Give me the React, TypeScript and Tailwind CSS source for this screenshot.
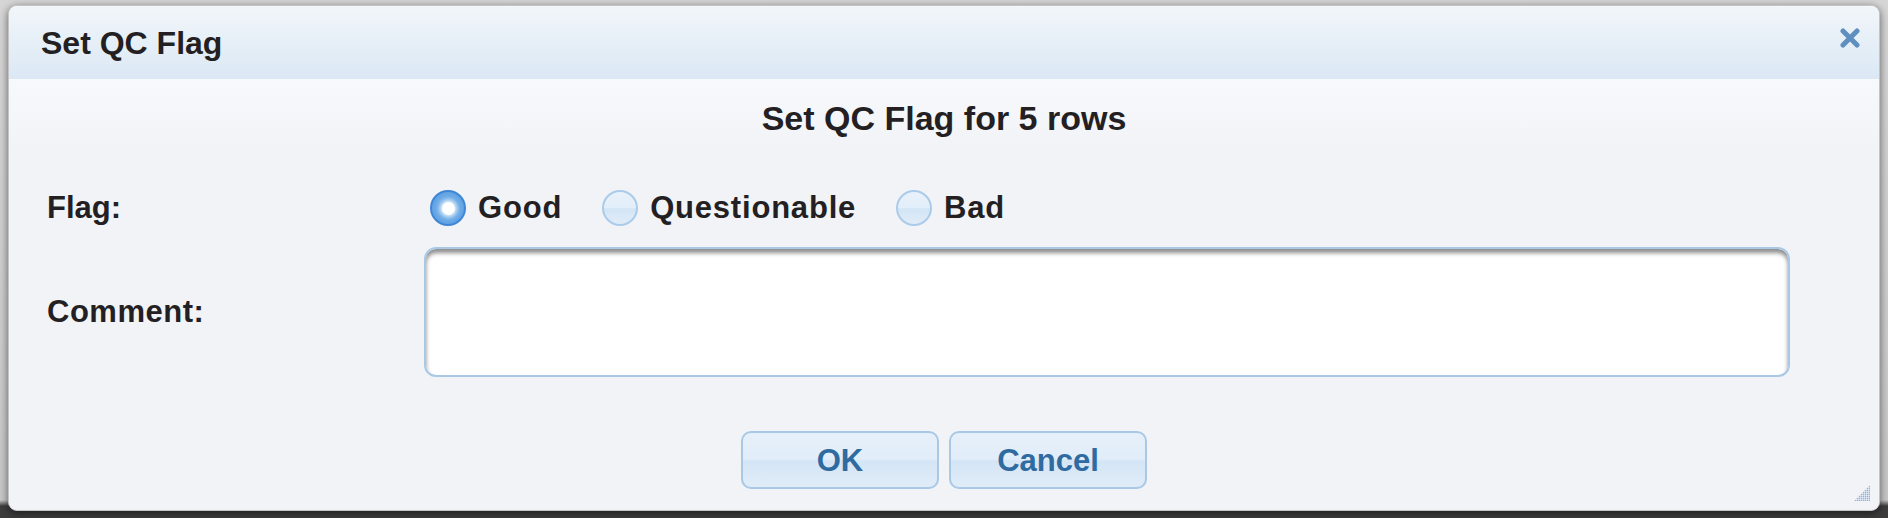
import { useState } from "react";

type Flag = "Good" | "Questionable" | "Bad";

const flags: Flag[] = ["Good", "Questionable", "Bad"];

function CloseIcon() {
  return (
    <svg width="22" height="20" viewBox="0 0 22 20" aria-hidden="true">
      <path d="M4 3 L18 17 M18 3 L4 17" stroke="#5e8fbf" strokeWidth="5" strokeLinecap="round" />
    </svg>
  );
}

function ResizeGrip() {
  return (
    <svg width="18" height="18" viewBox="0 0 18 18" aria-hidden="true">
      <defs>
        <pattern id="grip-dots" width="2" height="2" patternUnits="userSpaceOnUse">
          <rect width="1.4" height="1.4" fill="#8fb3dc" />
        </pattern>
      </defs>
      <path d="M17 1 L17 17 L1 17 Z" fill="url(#grip-dots)" />
    </svg>
  );
}

function Radio({ checked, label, onSelect }: { checked: boolean; label: string; onSelect: () => void }) {
  return (
    <label className="flex cursor-pointer items-center gap-[12px]" onClick={onSelect}>
      {checked ? (
        <span className="flex h-[36px] w-[36px] items-center justify-center rounded-full border-2 border-[#3f86d6] bg-[radial-gradient(circle,#9ccaf0_0%,#6aa9e6_55%,#4f96de_100%)]">
          <span className="h-[13px] w-[13px] rounded-full bg-white shadow-[0_0_4px_2px_rgba(255,255,255,0.8)]" />
        </span>
      ) : (
        <span className="h-[36px] w-[36px] rounded-full border-2 border-[#aacbea] bg-[linear-gradient(to_bottom,#e9f2fb_0%,#e2eef9_50%,#d3e5f5_52%,#e0ecf8_100%)]" />
      )}
      <span className="tracking-[0.8px]">{label}</span>
    </label>
  );
}

function DialogButton({ children }: { children: string }) {
  return (
    <button
      type="button"
      className="h-[58px] w-[198px] rounded-[10px] border-2 border-[#a9c8e6] bg-[linear-gradient(to_bottom,#e6f0fa_0%,#e1edf9_48%,#d4e5f5_52%,#e0ecf8_100%)] text-[31px] font-bold leading-none text-[#2f6aa1]"
    >
      {children}
    </button>
  );
}

export default function App() {
  const [flag, setFlag] = useState<Flag>("Good");
  const [comment, setComment] = useState("");

  return (
    <div
      className="h-[518px] w-[1888px] overflow-hidden bg-[linear-gradient(to_bottom,#d6d6d6_0px,#c8c8c8_500px,#3c3c3c_506px,#3c3c3c_518px)] px-[8px] pt-[5px] text-[#231f22]"
      style={{ fontFamily: '"Liberation Sans", Arial, sans-serif' }}
    >
      <div className="flex h-[506px] flex-col overflow-hidden rounded-[9px] border border-[#c4c4c4] bg-[#f1f3f7] shadow-[0_2px_8px_rgba(0,0,0,0.55)]">
        <div className="flex h-[73px] shrink-0 items-center justify-between bg-[linear-gradient(to_bottom,#f2f6fa_0%,#e6eff7_50%,#dbe8f4_100%)] pl-[32px] pr-[18px]">
          <h1 className="text-[32px] font-bold leading-none">Set QC Flag</h1>
          <button type="button" className="-mt-[10px]" aria-label="Close">
            <CloseIcon />
          </button>
        </div>

        <div className="relative flex flex-1 flex-col bg-[linear-gradient(to_bottom,#f8f9fb_0px,#f1f3f7_70px)]">
          <p className="pt-[20px] text-center text-[34px] font-bold leading-[38px]">Set QC Flag for 5 rows</p>

          <div className="mt-[53px] flex h-[36px] items-center pl-[38px] text-[31px] font-bold leading-[36px]">
            <span className="w-[377px] shrink-0">Flag:</span>
            <div className="ml-[6px] flex items-center gap-[40px]">
              {flags.map((f) => (
                <Radio key={f} checked={flag === f} label={f} onSelect={() => setFlag(f)} />
              ))}
            </div>
          </div>

          <div className="mt-[21px] flex items-center pl-[38px] pr-[89px] text-[31px] font-bold">
            <span className="w-[377px] shrink-0 tracking-[0.5px]">Comment:</span>
            <textarea
              className="h-[130px] flex-1 resize-none rounded-[12px] border-2 border-[#a9c8e6] bg-white p-2 text-[20px] font-normal shadow-[inset_0_4px_4px_rgba(0,0,0,0.45)] outline-none"
              value={comment}
              onChange={(event) => setComment(event.target.value)}
            />
          </div>

          <div className="mt-[54px] flex justify-center gap-[10px]">
            <DialogButton>OK</DialogButton>
            <DialogButton>Cancel</DialogButton>
          </div>

          <div className="absolute bottom-[8px] right-[8px]">
            <ResizeGrip />
          </div>
        </div>
      </div>
    </div>
  );
}
